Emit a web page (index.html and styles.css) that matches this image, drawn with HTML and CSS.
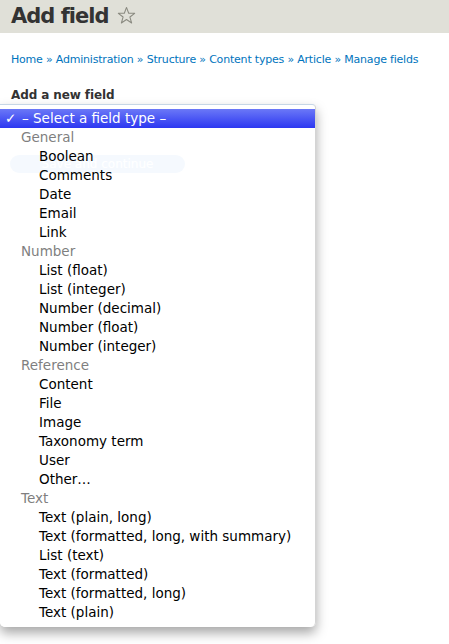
FILE: index.html
```html
<!DOCTYPE html>
<html>
<head>
<meta charset="utf-8">
<link rel="stylesheet" href="styles.css">
</head>
<body>
<div class="page-header">
  <h1 class="page-title">Add field</h1>
  <svg class="star" width="19" height="19" viewBox="0 0 20 20"><path d="M10 1.5 L12.3 7.6 L18.6 7.7 L13.6 11.6 L15.4 17.9 L10 14.2 L4.6 17.9 L6.4 11.6 L1.4 7.7 L7.7 7.6 Z" fill="none" stroke="#8a8a80" stroke-width="1.1" stroke-linejoin="round"/></svg>
</div>
<div class="content">
  <nav class="breadcrumb">
    <a href="#">Home</a> » <a href="#">Administration</a> » <a href="#">Structure</a> » <a href="#">Content types</a> » <a href="#">Article</a> » <a href="#">Manage fields</a>
  </nav>
  <div class="field-label">Add a new field</div>
  <div class="select-box"></div>
  <div class="save-button">Save and continue</div>
</div>

<div class="menu">
  <div class="row selected"><span class="check">✓</span><span class="opt">– Select a field type –</span></div>
  <div class="row group">General</div>
  <div class="row item">Boolean</div>
  <div class="row item">Comments</div>
  <div class="row item">Date</div>
  <div class="row item">Email</div>
  <div class="row item">Link</div>
  <div class="row group">Number</div>
  <div class="row item">List (float)</div>
  <div class="row item">List (integer)</div>
  <div class="row item">Number (decimal)</div>
  <div class="row item">Number (float)</div>
  <div class="row item">Number (integer)</div>
  <div class="row group">Reference</div>
  <div class="row item">Content</div>
  <div class="row item">File</div>
  <div class="row item">Image</div>
  <div class="row item">Taxonomy term</div>
  <div class="row item">User</div>
  <div class="row item">Other…</div>
  <div class="row group">Text</div>
  <div class="row item">Text (plain, long)</div>
  <div class="row item">Text (formatted, long, with summary)</div>
  <div class="row item">List (text)</div>
  <div class="row item">Text (formatted)</div>
  <div class="row item">Text (formatted, long)</div>
  <div class="row item">Text (plain)</div>
</div>
</body>
</html>
```

FILE: styles.css
```css
html, body {
  margin: 0;
  padding: 0;
  background: #ffffff;
  font-family: "DejaVu Sans", Verdana, sans-serif;
}

.page-header {
  height: 33px;
  background: #e0e0d8;
  display: flex;
  align-items: center;
  padding-left: 11px;
  box-sizing: border-box;
}

.page-title {
  margin: 0;
  font-size: 21px;
  font-weight: bold;
  color: #333333;
  letter-spacing: -1px;
  line-height: 33px;
}

.star {
  margin-left: 9px;
  margin-top: -3px;
}

.content {
  padding: 0 11px;
}

.breadcrumb {
  margin-top: 19px;
  font-size: 11px;
  line-height: 16px;
  color: #0074bd;
  letter-spacing: -0.2px;
}

.breadcrumb a {
  color: #0074bd;
  text-decoration: none;
}

.field-label {
  margin-top: 19px;
  font-size: 12px;
  font-weight: bold;
  line-height: 16px;
  color: #333333;
  letter-spacing: -0.1px;
}

.select-box {
  margin-top: 1px;
  height: 20px;
  width: 304px;
}

.save-button {
  margin-top: 31px;
  margin-left: -1px;
  width: 175px;
  height: 18px;
  border-radius: 9px;
  background: #8fbdec;
  color: #ffffff;
  font-size: 12px;
  line-height: 18px;
  text-align: center;
}

.menu {
  position: absolute;
  left: 0;
  top: 104px;
  width: 316px;
  box-sizing: border-box;
  padding: 5px 0 5px 0;
  background: rgba(255, 255, 255, 0.91);
  border-top: 1px solid #c6d6e6;
  border-right: 1px solid #d4d4d4;
  border-radius: 0 4px 5px 5px;
  box-shadow: 0 6px 12px rgba(0, 0, 0, 0.35);
  font-size: 13.5px;
}

.row {
  height: 19px;
  line-height: 19px;
  white-space: nowrap;
  color: #000000;
}

.selected {
  margin-top: -1px;
  background: linear-gradient(#6b78f7, #2c37f1);
  color: #ffffff;
  display: flex;
}

.check {
  width: 22px;
  padding-left: 5px;
  box-sizing: border-box;
}

.group {
  padding-left: 21px;
  color: #7f7f7f;
}

.item {
  padding-left: 39px;
}
```
